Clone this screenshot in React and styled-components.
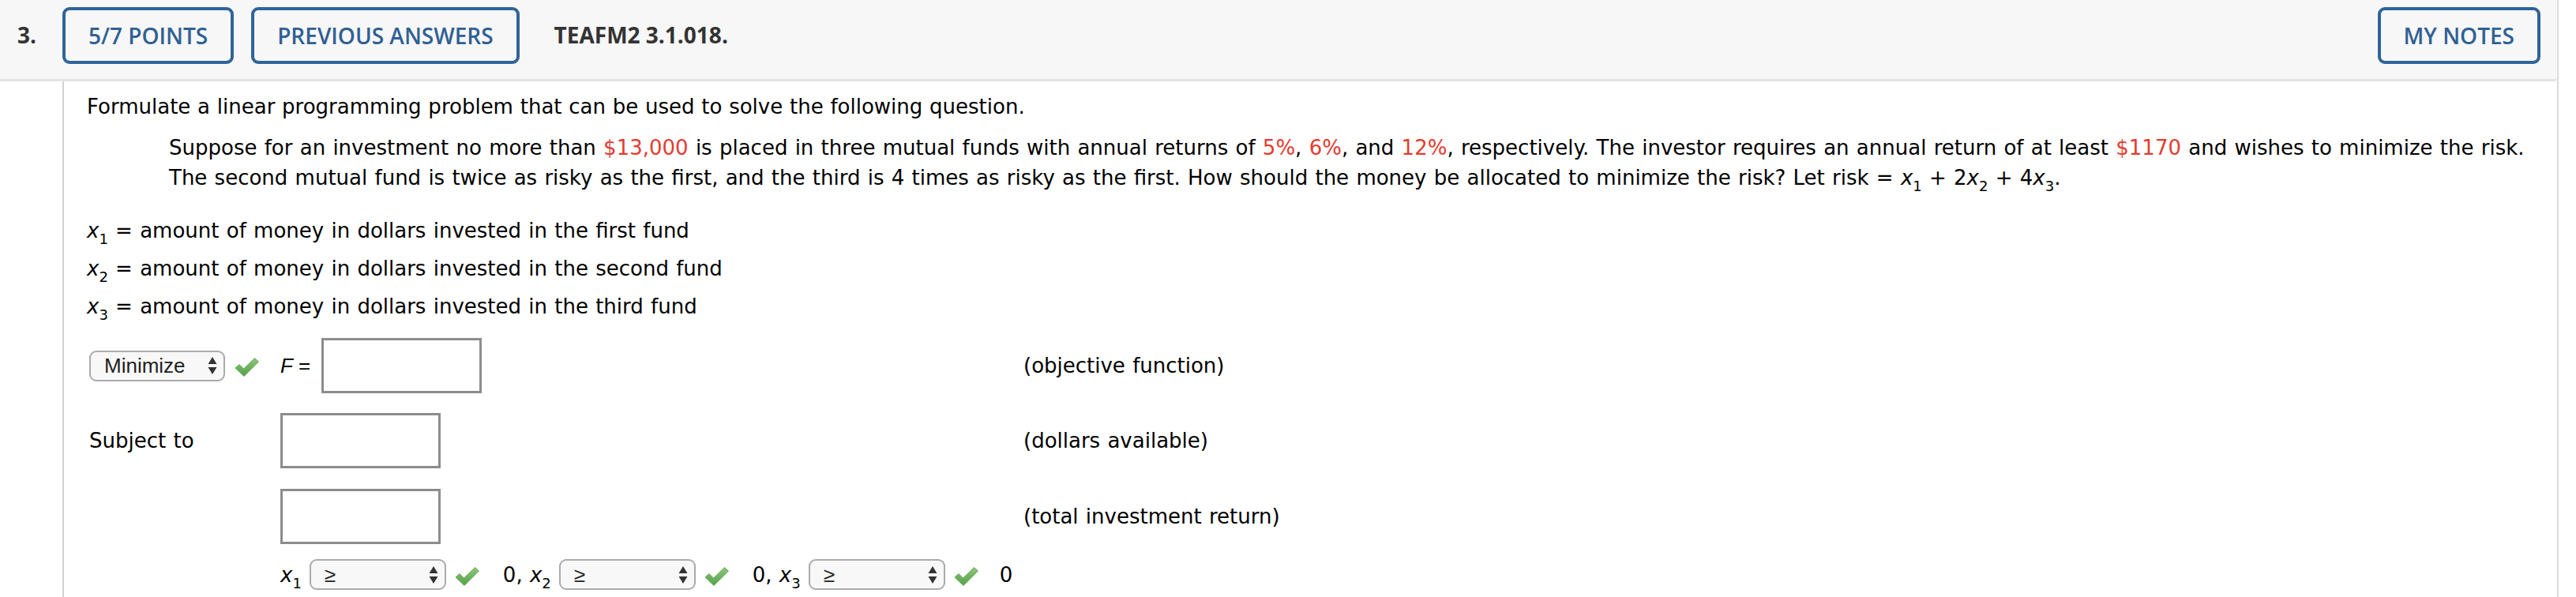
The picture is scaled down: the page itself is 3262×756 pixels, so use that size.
import React from "react";
import styled, { createGlobalStyle } from "styled-components";

const GlobalStyle = createGlobalStyle`
  html, body {
    margin: 0;
    padding: 0;
    background: #fff;
  }
  body {
    font-family: "DejaVu Sans", Verdana, sans-serif;
    color: #000;
  }
`;

const Card = styled.div`
  width: 3240px;
  height: 756px;
  box-sizing: border-box;
  border-right: 2px solid #dcdcdc;
  overflow: hidden;
`;

const Header = styled.header`
  display: flex;
  align-items: flex-start;
  box-sizing: border-box;
  height: 103px;
  padding: 9px 21px 0 22px;
  background: #f7f7f7;
  border-bottom: 3px solid #e2e2e2;
  border-bottom-right-radius: 4px;
  font-family: "Open Sans", sans-serif;
  font-size: 28px;
`;

const Number = styled.div`
  height: 72px;
  line-height: 70px;
  margin-right: 33px;
  font-weight: 700;
  color: #333;
`;

const HeaderButton = styled.button`
  height: 72px;
  box-sizing: border-box;
  padding: 0 29px;
  margin-right: ${(p) => (p.$last ? "0" : "22px")};
  margin-left: ${(p) => (p.$push ? "auto" : "0")};
  border: 4px solid #30649a;
  border-radius: 9px;
  background: transparent;
  font-family: "Open Sans", sans-serif;
  font-size: 28px;
  font-weight: 600;
  color: #2f6094;
  cursor: pointer;
`;

const Title = styled.div`
  height: 72px;
  line-height: 70px;
  margin-left: 22px;
  font-weight: 700;
  color: #333;
`;

const Body = styled.div`
  margin-left: 79px;
  min-height: 653px;
  border-left: 2px solid #d3d3d3;
  padding: 13px 0 0 29px;
  font-size: 26px;
  line-height: 38px;
  word-spacing: 1px;
`;

const Intro = styled.p`
  margin: 0;
  word-spacing: 0.5px;
`;

const Problem = styled.div`
  margin: 14px 0 0 104px;
`;

const Line = styled.span`
  display: block;
  white-space: nowrap;
`;

const Red = styled.span`
  color: #e53b2f;
`;

const Var = styled.span`
  font-style: italic;
`;

const Sub = styled.sub`
  font-size: 18px;
  font-style: normal;
  line-height: 0;
  vertical-align: -8px;
`;

const Defs = styled.div`
  margin-top: 24px;
  line-height: 48px;
`;

const Form = styled.div`
  padding-left: 3px;
`;

const Row = styled.div`
  display: grid;
  grid-template-columns: 242px 941px auto;
  align-items: center;
  height: ${(p) => p.$h}px;
  margin-top: ${(p) => p.$top}px;
`;

const Cell = styled.div`
  display: flex;
  align-items: center;
  grid-column: ${(p) => p.$span || "auto"};
`;

const SelectBox = styled.div`
  display: flex;
  align-items: center;
  justify-content: space-between;
  width: ${(p) => p.$w}px;
  height: 39px;
  box-sizing: border-box;
  padding: 0 8px 0 17px;
  border: 2px solid #ababab;
  border-radius: 9px;
  background: #f8f8f8;
  font-family: "Liberation Sans", Arial, sans-serif;
  font-size: 26px;
  color: #222;
`;

const Input = styled.div`
  width: 203px;
  height: 70px;
  box-sizing: border-box;
  border: 3px solid #8c8c8c;
  background: #fff;
`;

const Equals = styled.span`
  font-family: "Liberation Sans", Arial, sans-serif;
  font-size: 26px;
  margin-right: 14px;
  word-spacing: 0;
`;

const Term = styled.span`
  margin-right: 10px;
  white-space: nowrap;
`;

const CheckWrap = styled.span`
  display: inline-flex;
  margin: 4px ${(p) => p.$after}px 0 ${(p) => p.$before}px;
`;

const Label = styled.div``;

const Arrows = () => (
  <svg width="12" height="24" viewBox="0 0 12 24">
    <path d="M0.5 10 L6 1 L11.5 10 Z" fill="#333" />
    <path d="M0.5 14 L11.5 14 L6 23 Z" fill="#333" />
  </svg>
);

const Check = ({ before = 11, after = 0 }) => (
  <CheckWrap $before={before} $after={after}>
    <svg width="31" height="26" viewBox="0 0 31 26">
      <defs>
        <linearGradient id="ck" x1="0" y1="0" x2="0" y2="1">
          <stop offset="0" stopColor="#8cc97a" />
          <stop offset="1" stopColor="#549f47" />
        </linearGradient>
      </defs>
      <path
        d="M1 14 L6 9.5 L11.5 15 L25.5 1.5 L30.5 6 L12 24.5 Z"
        fill="url(#ck)"
        stroke="#5a9a4d"
        strokeWidth="0.8"
        strokeLinejoin="round"
      />
    </svg>
  </CheckWrap>
);

const Select = ({ value, w = 173 }) => (
  <SelectBox $w={w}>
    <span>{value}</span>
    <Arrows />
  </SelectBox>
);

const X = ({ n }) => (
  <>
    <Var>x</Var>
    <Sub>{n}</Sub>
  </>
);

export default function App() {
  return (
    <>
      <GlobalStyle />
      <Card>
        <Header>
          <Number>3.</Number>
          <HeaderButton>5/7 POINTS</HeaderButton>
          <HeaderButton>PREVIOUS ANSWERS</HeaderButton>
          <Title>TEAFM2 3.1.018.</Title>
          <HeaderButton $push $last>
            MY NOTES
          </HeaderButton>
        </Header>
        <Body>
          <Intro>
            Formulate a linear programming problem that can be used to solve the following question.
          </Intro>
          <Problem>
            <Line>
              Suppose for an investment no more than <Red>$13,000</Red> is placed in three mutual
              funds with annual returns of <Red>5%</Red>, <Red>6%</Red>, and <Red>12%</Red>,
              respectively. The investor requires an annual return of at least <Red>$1170</Red> and
              wishes to minimize the risk.
            </Line>
            <Line>
              The second mutual fund is twice as risky as the first, and the third is 4 times as risky
              as the first. How should the money be allocated to minimize the risk? Let risk ={" "}
              <X n="1" /> + 2<X n="2" /> + 4<X n="3" />.
            </Line>
          </Problem>
          <Defs>
            <div>
              <X n="1" /> = amount of money in dollars invested in the first fund
            </div>
            <div>
              <X n="2" /> = amount of money in dollars invested in the second fund
            </div>
            <div>
              <X n="3" /> = amount of money in dollars invested in the third fund
            </div>
          </Defs>
          <Form>
            <Row $h={70} $top={16}>
              <Cell>
                <Select value="Minimize" w={172} />
                <Check before={12} />
              </Cell>
              <Cell>
                <Equals>
                  <i>F</i> =
                </Equals>
                <Input />
              </Cell>
              <Label>(objective function)</Label>
            </Row>
            <Row $h={71} $top={24}>
              <Cell>Subject to</Cell>
              <Cell>
                <Input />
              </Cell>
              <Label>(dollars available)</Label>
            </Row>
            <Row $h={71} $top={25}>
              <Cell />
              <Cell>
                <Input />
              </Cell>
              <Label>(total investment return)</Label>
            </Row>
            <Row $h={39} $top={19}>
              <Cell />
              <Cell $span="2 / 4">
                <Term>
                  <X n="1" />
                </Term>
                <Select value="≥" />
                <Check after={30} />
                <Term>
                  0, <X n="2" />
                </Term>
                <Select value="≥" />
                <Check after={30} />
                <Term>
                  0, <X n="3" />
                </Term>
                <Select value="≥" />
                <Check after={27} />
                <span>0</span>
              </Cell>
            </Row>
          </Form>
        </Body>
      </Card>
    </>
  );
}
